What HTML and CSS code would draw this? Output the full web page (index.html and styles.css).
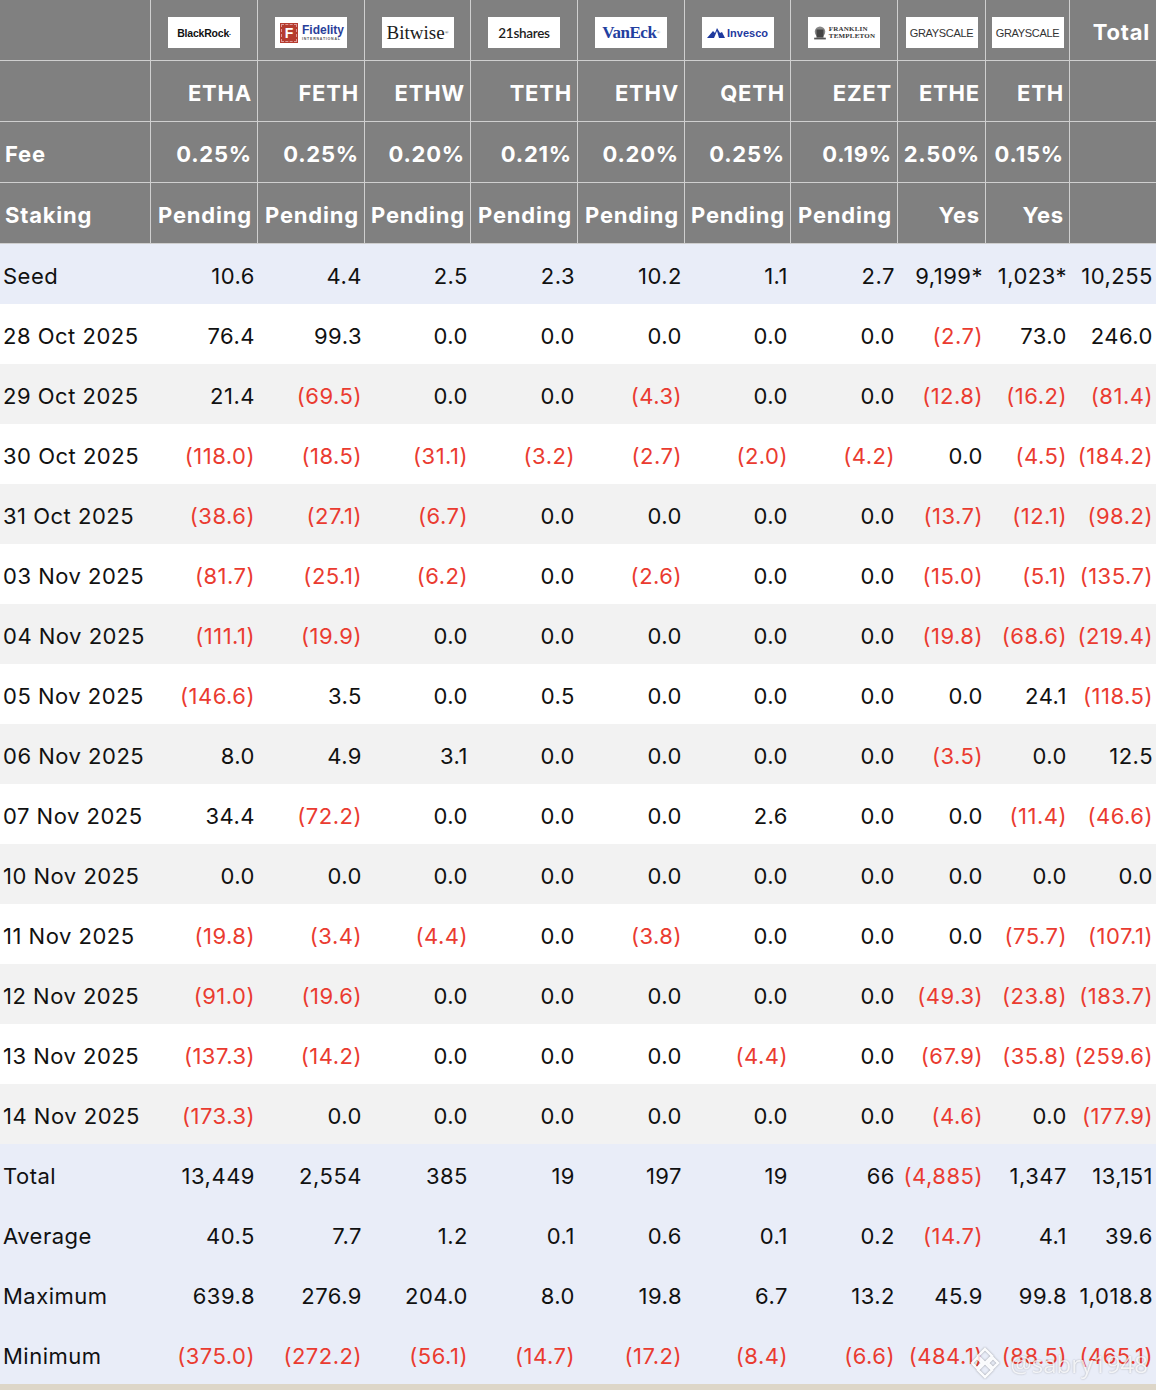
FILE: index.html
```html
<!DOCTYPE html>
<html>
<head>
<meta charset="utf-8">
<link rel="stylesheet" href="styles.css">
</head>
<body>
<div class="sheet">
  <div class="row head">
    <div class="c"></div>
    <div class="c logo-cell"><div class="logo blackrock">BlackRock<span class="dot">.</span></div></div>
    <div class="c logo-cell"><div class="logo fidelity"><span class="fbox">F</span><span class="fname">Fidelity<small>INTERNATIONAL</small></span></div></div>
    <div class="c logo-cell"><div class="logo bitwise">Bitwise<sup>®</sup></div></div>
    <div class="c logo-cell"><div class="logo shares">21shares</div></div>
    <div class="c logo-cell"><div class="logo vaneck">VanEck<sup>®</sup></div></div>
    <div class="c logo-cell"><div class="logo invesco"><svg width="18" height="10" viewBox="0 0 18 10"><path d="M0 10 L6 3 L8 5 L10 0 L13 5 L15 4 L18 10 Z" fill="#1f3a9e"/><path d="M7 10 L10 3 L12 10 Z" fill="#fff"/></svg>Invesco</div></div>
    <div class="c logo-cell"><div class="logo franklin"><svg width="14" height="14" viewBox="0 0 12 12"><circle cx="6" cy="5" r="4.5" fill="#888"/><rect x="3" y="3" width="6" height="7" fill="#444"/><rect x="1" y="10" width="10" height="1.5" fill="#555"/></svg><span>FRANKLIN<br>TEMPLETON</span></div></div>
    <div class="c logo-cell"><div class="logo grayscale">GRAYSCALE</div></div>
    <div class="c logo-cell"><div class="logo grayscale">GRAYSCALE</div></div>
    <div class="c last total-h">Total</div>
  </div>
  <div class="row head">
    <div class="c"></div>
    <div class="c">ETHA</div><div class="c">FETH</div><div class="c">ETHW</div><div class="c">TETH</div><div class="c">ETHV</div><div class="c">QETH</div><div class="c">EZET</div><div class="c">ETHE</div><div class="c">ETH</div><div class="c last"></div>
  </div>
  <div class="row head">
    <div class="c lbl">Fee</div>
    <div class="c">0.25%</div><div class="c">0.25%</div><div class="c">0.20%</div><div class="c">0.21%</div><div class="c">0.20%</div><div class="c">0.25%</div><div class="c">0.19%</div><div class="c">2.50%</div><div class="c">0.15%</div><div class="c last"></div>
  </div>
  <div class="row head">
    <div class="c lbl">Staking</div>
    <div class="c">Pending</div><div class="c">Pending</div><div class="c">Pending</div><div class="c">Pending</div><div class="c">Pending</div><div class="c">Pending</div><div class="c">Pending</div><div class="c">Yes</div><div class="c">Yes</div><div class="c last"></div>
  </div>

  <div class="row data blue"><div class="c lbl">Seed</div><div class="c">10.6</div><div class="c">4.4</div><div class="c">2.5</div><div class="c">2.3</div><div class="c">10.2</div><div class="c">1.1</div><div class="c">2.7</div><div class="c">9,199*</div><div class="c">1,023*</div><div class="c">10,255</div></div>
  <div class="row data white"><div class="c lbl">28 Oct 2025</div><div class="c">76.4</div><div class="c">99.3</div><div class="c">0.0</div><div class="c">0.0</div><div class="c">0.0</div><div class="c">0.0</div><div class="c">0.0</div><div class="c neg">(2.7)</div><div class="c">73.0</div><div class="c">246.0</div></div>
  <div class="row data grey"><div class="c lbl">29 Oct 2025</div><div class="c">21.4</div><div class="c neg">(69.5)</div><div class="c">0.0</div><div class="c">0.0</div><div class="c neg">(4.3)</div><div class="c">0.0</div><div class="c">0.0</div><div class="c neg">(12.8)</div><div class="c neg">(16.2)</div><div class="c neg">(81.4)</div></div>
  <div class="row data white"><div class="c lbl">30 Oct 2025</div><div class="c neg">(118.0)</div><div class="c neg">(18.5)</div><div class="c neg">(31.1)</div><div class="c neg">(3.2)</div><div class="c neg">(2.7)</div><div class="c neg">(2.0)</div><div class="c neg">(4.2)</div><div class="c">0.0</div><div class="c neg">(4.5)</div><div class="c neg">(184.2)</div></div>
  <div class="row data grey"><div class="c lbl">31 Oct 2025</div><div class="c neg">(38.6)</div><div class="c neg">(27.1)</div><div class="c neg">(6.7)</div><div class="c">0.0</div><div class="c">0.0</div><div class="c">0.0</div><div class="c">0.0</div><div class="c neg">(13.7)</div><div class="c neg">(12.1)</div><div class="c neg">(98.2)</div></div>
  <div class="row data white"><div class="c lbl">03 Nov 2025</div><div class="c neg">(81.7)</div><div class="c neg">(25.1)</div><div class="c neg">(6.2)</div><div class="c">0.0</div><div class="c neg">(2.6)</div><div class="c">0.0</div><div class="c">0.0</div><div class="c neg">(15.0)</div><div class="c neg">(5.1)</div><div class="c neg">(135.7)</div></div>
  <div class="row data grey"><div class="c lbl">04 Nov 2025</div><div class="c neg">(111.1)</div><div class="c neg">(19.9)</div><div class="c">0.0</div><div class="c">0.0</div><div class="c">0.0</div><div class="c">0.0</div><div class="c">0.0</div><div class="c neg">(19.8)</div><div class="c neg">(68.6)</div><div class="c neg">(219.4)</div></div>
  <div class="row data white"><div class="c lbl">05 Nov 2025</div><div class="c neg">(146.6)</div><div class="c">3.5</div><div class="c">0.0</div><div class="c">0.5</div><div class="c">0.0</div><div class="c">0.0</div><div class="c">0.0</div><div class="c">0.0</div><div class="c">24.1</div><div class="c neg">(118.5)</div></div>
  <div class="row data grey"><div class="c lbl">06 Nov 2025</div><div class="c">8.0</div><div class="c">4.9</div><div class="c">3.1</div><div class="c">0.0</div><div class="c">0.0</div><div class="c">0.0</div><div class="c">0.0</div><div class="c neg">(3.5)</div><div class="c">0.0</div><div class="c">12.5</div></div>
  <div class="row data white"><div class="c lbl">07 Nov 2025</div><div class="c">34.4</div><div class="c neg">(72.2)</div><div class="c">0.0</div><div class="c">0.0</div><div class="c">0.0</div><div class="c">2.6</div><div class="c">0.0</div><div class="c">0.0</div><div class="c neg">(11.4)</div><div class="c neg">(46.6)</div></div>
  <div class="row data grey"><div class="c lbl">10 Nov 2025</div><div class="c">0.0</div><div class="c">0.0</div><div class="c">0.0</div><div class="c">0.0</div><div class="c">0.0</div><div class="c">0.0</div><div class="c">0.0</div><div class="c">0.0</div><div class="c">0.0</div><div class="c">0.0</div></div>
  <div class="row data white"><div class="c lbl">11 Nov 2025</div><div class="c neg">(19.8)</div><div class="c neg">(3.4)</div><div class="c neg">(4.4)</div><div class="c">0.0</div><div class="c neg">(3.8)</div><div class="c">0.0</div><div class="c">0.0</div><div class="c">0.0</div><div class="c neg">(75.7)</div><div class="c neg">(107.1)</div></div>
  <div class="row data grey"><div class="c lbl">12 Nov 2025</div><div class="c neg">(91.0)</div><div class="c neg">(19.6)</div><div class="c">0.0</div><div class="c">0.0</div><div class="c">0.0</div><div class="c">0.0</div><div class="c">0.0</div><div class="c neg">(49.3)</div><div class="c neg">(23.8)</div><div class="c neg">(183.7)</div></div>
  <div class="row data white"><div class="c lbl">13 Nov 2025</div><div class="c neg">(137.3)</div><div class="c neg">(14.2)</div><div class="c">0.0</div><div class="c">0.0</div><div class="c">0.0</div><div class="c neg">(4.4)</div><div class="c">0.0</div><div class="c neg">(67.9)</div><div class="c neg">(35.8)</div><div class="c neg">(259.6)</div></div>
  <div class="row data grey"><div class="c lbl">14 Nov 2025</div><div class="c neg">(173.3)</div><div class="c">0.0</div><div class="c">0.0</div><div class="c">0.0</div><div class="c">0.0</div><div class="c">0.0</div><div class="c">0.0</div><div class="c neg">(4.6)</div><div class="c">0.0</div><div class="c neg">(177.9)</div></div>

  <div class="row data blue"><div class="c lbl">Total</div><div class="c">13,449</div><div class="c">2,554</div><div class="c">385</div><div class="c">19</div><div class="c">197</div><div class="c">19</div><div class="c">66</div><div class="c neg">(4,885)</div><div class="c">1,347</div><div class="c">13,151</div></div>
  <div class="row data blue"><div class="c lbl">Average</div><div class="c">40.5</div><div class="c">7.7</div><div class="c">1.2</div><div class="c">0.1</div><div class="c">0.6</div><div class="c">0.1</div><div class="c">0.2</div><div class="c neg">(14.7)</div><div class="c">4.1</div><div class="c">39.6</div></div>
  <div class="row data blue"><div class="c lbl">Maximum</div><div class="c">639.8</div><div class="c">276.9</div><div class="c">204.0</div><div class="c">8.0</div><div class="c">19.8</div><div class="c">6.7</div><div class="c">13.2</div><div class="c">45.9</div><div class="c">99.8</div><div class="c">1,018.8</div></div>
  <div class="row data blue"><div class="c lbl">Minimum</div><div class="c neg">(375.0)</div><div class="c neg">(272.2)</div><div class="c neg">(56.1)</div><div class="c neg">(14.7)</div><div class="c neg">(17.2)</div><div class="c neg">(8.4)</div><div class="c neg">(6.6)</div><div class="c neg">(484.1)</div><div class="c neg">(88.5)</div><div class="c neg">(465.1)</div></div>
  <div class="foot"></div>

  <div class="watermark">
    <svg width="34" height="34" viewBox="0 0 34 34"><g fill="none" stroke="#fff" stroke-width="2.4"><path d="M17 3 L24 10 L17 17 L10 10 Z"/><path d="M17 17 L24 24 L17 31 L10 24 Z"/><path d="M4 17 L9 12 L14 17 L9 22 Z"/><path d="M20 17 L25 12 L30 17 L25 22 Z"/></g></svg>
    <span>@sabry1948</span>
  </div>
</div>
</body>
</html>
```

FILE: styles.css
```css
* { box-sizing: border-box; }
html, body { margin: 0; padding: 0; background: #fff; }
body { font-family: Inter, "Noto Sans", "Liberation Sans", sans-serif; color: #111; }

.sheet { position: relative; width: 1156px; }

.row {
  display: grid;
  grid-template-columns: 151px 107px 107px 106px 107px 107px 106px 107px 88px 84px 86px;
  height: 60px;
}
.row .c {
  display: flex;
  align-items: center;
  justify-content: flex-end;
  white-space: nowrap;
}
.row .c.lbl { justify-content: flex-start; }

.head {
  height: 61px;
  background: #808080;
  border-bottom: 1px solid #cfcfcf;
  color: #fff;
  font-weight: 700;
  font-size: 22px;
  letter-spacing: 0.8px;
}
.head .c { border-right: 1px solid #cfcfcf; padding-right: 5px; padding-top: 4px; }
.head .c.last { border-right: none; }
.head .c.lbl { padding-left: 5px; }
.head .total-h { padding-right: 6px; padding-top: 4px; }

.logo-cell { justify-content: center !important; padding-right: 0 !important; padding-top: 5px !important; }
.logo {
  width: 72px;
  height: 31px;
  background: #fff;
  display: flex;
  align-items: center;
  justify-content: center;
  letter-spacing: 0;
  color: #111;
  font-weight: 400;
}
.blackrock { font-family: "Liberation Sans", Arial, sans-serif; font-weight: 700; font-size: 10.5px; letter-spacing: -0.2px; }
.blackrock .dot { font-size: 7px; }
.fidelity { gap: 4px; padding-left: 2px; }
.fidelity .fbox {
  width: 18px; height: 20px; background: #b53c2f; color: #fff;
  font-family: "Liberation Sans", sans-serif; font-weight: 700; font-size: 14px;
  display: flex; align-items: center; justify-content: center;
  outline: 1px dashed #d99; outline-offset: -2px;
}
.fidelity .fname {
  display: flex; flex-direction: column; align-items: flex-start;
  font-family: "Liberation Sans", sans-serif; font-weight: 700; font-size: 12px;
  color: #2a3f9a; line-height: 12px;
}
.fidelity small { font-size: 3.5px; letter-spacing: 0.8px; line-height: 4px; color: #555; margin-top: 1px; }
.bitwise { font-family: "Liberation Serif", "DejaVu Serif", serif; font-size: 19px; color: #1b1b1b; }
.bitwise sup { font-size: 5px; vertical-align: 10px; }
.shares { font-family: Lato, "Open Sans", sans-serif; font-size: 13.5px; font-weight: 600; color: #1c1c1c; letter-spacing: -0.3px; }
.vaneck { font-family: "Liberation Serif", serif; font-weight: 700; font-size: 17px; color: #2340a0; letter-spacing: -0.5px; }
.vaneck sup { font-size: 5px; color: #999; vertical-align: 9px; }
.invesco { font-family: "Liberation Sans", sans-serif; font-weight: 700; font-size: 11px; color: #1f3a9e; gap: 2px; }
.franklin { gap: 2px; font-family: "Liberation Serif", serif; font-size: 7px; line-height: 7px; font-weight: 700; color: #333; letter-spacing: 0.2px; }
.grayscale { font-family: "Liberation Sans", sans-serif; font-size: 11px; color: #333; letter-spacing: -0.3px; }

.data { font-size: 22px; letter-spacing: 0.5px; }
.data .c { padding-right: 3px; padding-top: 4px; }
.data .c.lbl { padding-left: 3px; }
.blue { background: #e9edf8; }
.white { background: #ffffff; }
.grey { background: #f2f2f2; }
.neg { color: #ea3b30; }

.foot { height: 6px; background: #ddd6c8; }

.watermark {
  position: absolute;
  right: 8px;
  bottom: 10px;
  display: flex;
  align-items: center;
  gap: 8px;
  color: rgba(255,255,255,0.85);
  font-size: 24px;
  font-family: "Open Sans", sans-serif;
  text-shadow: 0 0 2px rgba(0,0,0,0.35);
  opacity: 0.85;
}
.watermark svg { filter: drop-shadow(0 0 1px rgba(0,0,0,0.4)); }
```
